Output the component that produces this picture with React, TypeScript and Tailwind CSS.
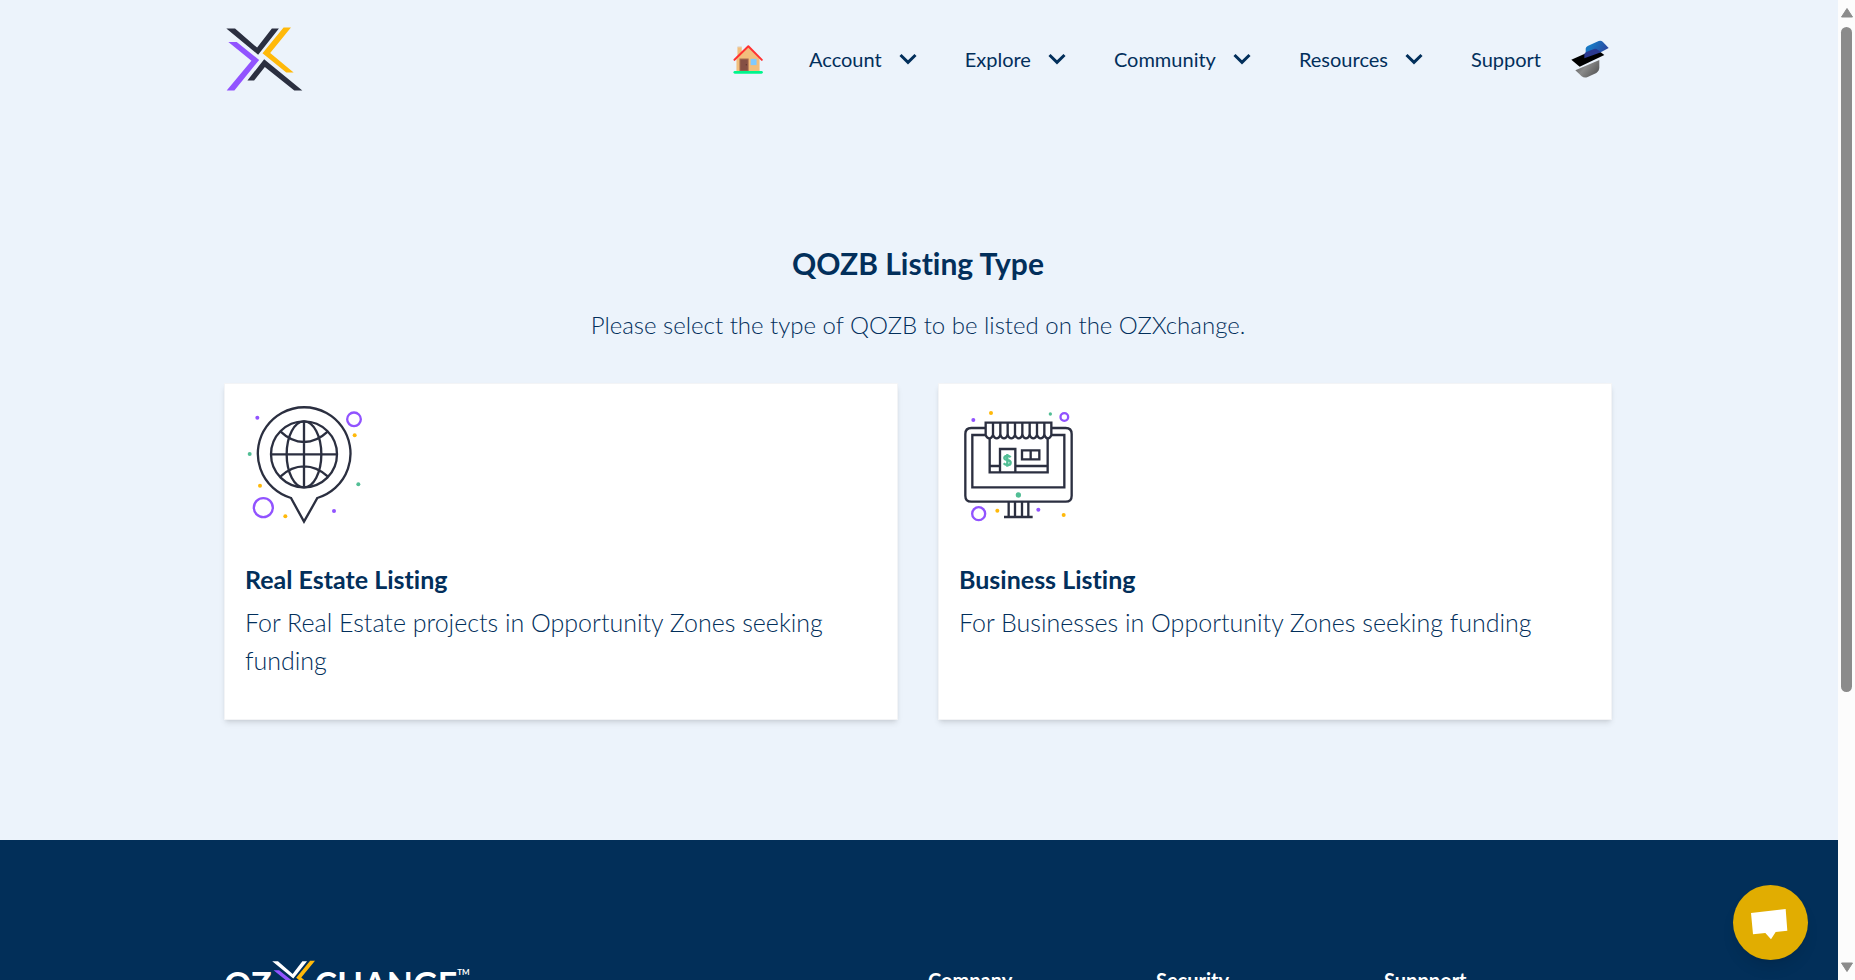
import React, { ReactNode } from "react";

const menus = ["Account", "Explore", "Community", "Resources"];

const footerColumns = ["Company", "Security", "Suppport"];

const LogoMark = ({ className, dark }: { className: string; dark: string }) => (
  <svg viewBox="48 53 230 190" className={className} aria-hidden="true">
    <path fill={dark} d="M49 57H75L141 114L185 57H206L144 135Z" />
    <path fill="#ffb90a" d="M220 54H242L180 130L250 188H228L157 131Z" />
    <path fill="#9153ff" d="M55 97H80L147 151L73 242H50L124 153Z" />
    <path fill={dark} d="M112 212L162 149L276 242H252L164 172L132 212Z" />
  </svg>
);

const HouseIcon = () => (
  <svg viewBox="71 76 90 88" className="h-[29px] w-[30px]" aria-hidden="true">
    <path fill="#f2be7c" d="M84 82H97V100L117 82L151 116V157H81V112L84 109Z" />
    <path fill="#e3e0dc" d="M84 79H97V83H84Z" />
    <path fill="#a56a4e" d="M90 117H118V155H90Z" />
    <path fill="#855044" d="M93 120H115V153H93Z" />
    <circle cx="111" cy="136" r="2" fill="#5d3530" />
    <path fill="#7fcaff" d="M124 118H142V137H124Z" />
    <path fill="none" stroke="#ff3131" strokeWidth="6" strokeLinecap="round" strokeLinejoin="round" d="M75 121L117 80L158 121" />
    <rect x="72" y="155" width="89" height="8" rx="4" fill="#00f58c" />
  </svg>
);

const Chevron = () => (
  <svg viewBox="0 0 18 12" className="h-3 w-[18px]" fill="none" stroke="#022f5b" strokeWidth="3" aria-hidden="true">
    <path d="M1.5 2L9 9.3L16.500 2" />
  </svg>
);

const Avatar = () => (
  <svg viewBox="1172 61 114 114" className="size-[38px]" aria-hidden="true">
    <defs>
      <linearGradient id="blue" x1="0" x2="1" y1="0" y2="0.4">
        <stop offset="0.3" stopColor="#1878c4" />
        <stop offset="1" stopColor="#2a479f" />
      </linearGradient>
      <linearGradient id="gray" x1="0" x2="1" y1="0" y2="0.6">
        <stop offset="0" stopColor="#555" />
        <stop offset="0.5" stopColor="#8a8a8a" />
        <stop offset="1" stopColor="#5c5c5c" />
      </linearGradient>
    </defs>
    <path fill="#000" d="M1173 120L1247 87L1272 106L1198 141Z" />
    <path fill="url(#blue)" d="M1216 104V87Q1216 82 1222 79L1255 64Q1262 61 1267 66L1285 85L1264 96L1216 110Z" />
    <path fill="#2b3990" d="M1212 116V104Q1213 99 1218 97L1241 88Q1247 86 1252 90L1262 98Z" />
    <path fill="url(#gray)" d="M1185 152L1257 121V143Q1257 154 1248 160L1222 172Q1212 176 1204 170Z" />
  </svg>
);

const GlobePin = () => (
  <svg viewBox="90 90 360 360" className="size-[120px]" fill="none" stroke="#2b2f40" strokeWidth="7" aria-hidden="true">
    <path d="M228 366A139 139 0 1 1 307 366L267 437Z" />
    <circle cx="267" cy="235" r="99" />
    <ellipse cx="267" cy="235" rx="52" ry="99" />
    <path d="M267 136V334M168 235H366M197 167Q229 198 267 198T338 167M197 301Q229 271 267 271T338 301" />
    <g stroke="#9153ff">
      <circle cx="417" cy="130" r="20.500" />
      <circle cx="145" cy="395" r="28.500" />
    </g>
    <g stroke="none">
      <circle cx="127" cy="125" r="6" fill="#9153ff" />
      <circle cx="357" cy="405" r="6" fill="#9153ff" />
      <circle cx="419" cy="178" r="6" fill="#ffb90a" />
      <circle cx="135" cy="329" r="6" fill="#ffb90a" />
      <circle cx="211" cy="421" r="6" fill="#ffb90a" />
      <circle cx="104" cy="234" r="6" fill="#52be95" />
      <circle cx="430" cy="325" r="6" fill="#52be95" />
    </g>
  </svg>
);

const StoreMonitor = () => (
  <svg viewBox="87 90 360 360" className="size-[120px]" fill="none" stroke="#2b2f40" strokeWidth="7" aria-hidden="true">
    <path d="M166 156H124Q106 156 106 174V359Q106 377 124 377H407Q425 377 425 359V174Q425 156 407 156H365" />
    <path d="M166 177H127V334H403V177H365" />
    <path d="M179 187V289H353V187M179 270H210M257 270H353M210 289V219H256V289" />
    <path d="M276 223H328V250H276ZM302 223V250" />
    <path d="M167 140H364V178Q360 187 354 187T343 178Q339 187 332 187T321 178Q317 187 310 187T299 178Q295 187 288 187T277 178Q273 187 266 187T255 178Q251 187 244 187T233 178Q229 187 222 187T211 178Q207 187 200 187T189 178Q185 187 178 187T167 178Z" />
    <path d="M189 140V180M211 140V180M233 140V180M255 140V180M277 140V180M299 140V180M321 140V180M343 140V180" />
    <path d="M236 377V423M255 377V423M276 377V423M295 377V423M222 423H308" />
    <path stroke="#52be95" d="M242 244Q238 239 231 240Q222 241 223 247Q224 251 232 252Q242 254 242 260Q242 267 232 267Q225 267 221 262M232 234V272" />
    <g stroke="#9153ff">
      <circle cx="403" cy="123" r="11.500" />
      <circle cx="146" cy="413" r="19.500" />
    </g>
    <g stroke="none">
      <circle cx="130" cy="132" r="6" fill="#9153ff" />
      <circle cx="325" cy="401" r="6" fill="#9153ff" />
      <circle cx="183" cy="111" r="6" fill="#ffb90a" />
      <circle cx="202" cy="404" r="6" fill="#ffb90a" />
      <circle cx="401" cy="417" r="6" fill="#ffb90a" />
      <circle cx="361" cy="114" r="5" fill="#52be95" />
      <circle cx="265" cy="357" r="8" fill="#52be95" />
    </g>
  </svg>
);

const listings = [
  {
    title: "Real Estate Listing",
    text: "For Real Estate projects in Opportunity Zones seeking funding",
    icon: <GlobePin />,
  },
  {
    title: "Business Listing",
    text: "For Businesses in Opportunity Zones seeking funding",
    icon: <StoreMonitor />,
  },
];

const Header = () => (
  <header className="mx-auto flex h-[118px] w-full max-w-[1388px] items-center justify-between">
    <a href="#" aria-label="Home" className="pl-0.5">
      <LogoMark className="h-16 w-[77px]" dark="#2b2f40" />
    </a>
    <nav className="flex items-center text-xl">
      <a href="#" aria-label="Dashboard" className="mr-[46px]">
        <HouseIcon />
      </a>
      {menus.map((menu) => (
        <button key={menu} type="button" className="mr-12 flex items-center gap-[17px]">
          {menu}
          <Chevron />
        </button>
      ))}
      <a href="#">Support</a>
      <button type="button" aria-label="Profile" className="ml-[30px] mr-[3px]">
        <Avatar />
      </button>
    </nav>
  </header>
);

const ListingTypes = () => (
  <main className="mx-auto w-full max-w-[1388px] py-[120px]">
    <h1 className="text-center text-[30px] leading-[50px] font-bold">QOZB Listing Type</h1>
    <p className="mt-[18px] text-center text-2xl leading-[38px] font-light">
      Please select the type of QOZB to be listed on the OZXchange.
    </p>
    <div className="mt-[39px] grid grid-cols-2 gap-10">
      {listings.map((listing) => (
        <a
          key={listing.title}
          href="#"
          className="block border border-gray-100 bg-white px-5 pt-[22px] pb-10 shadow-md"
        >
          {listing.icon}
          <h2 className="mt-[35px] text-[25px] leading-9 font-bold">{listing.title}</h2>
          <p className="mt-1.5 text-[25px] leading-[38px] font-light">{listing.text}</p>
        </a>
      ))}
    </div>
  </main>
);

const Footer = () => (
  <footer className="flex-1 bg-[#022f59] pr-0.5 text-white">
    <div className="mx-auto flex max-w-[1388px] pt-[120px]">
      <div className="flex w-1/2 items-start text-[34px] leading-10 font-bold">
        <span className="pt-1">OZ</span>
        <LogoMark className="h-[43px] w-[51px]" dark="#ffffff" />
        <span className="-ml-2 pt-1">CHANGE</span>
        <span className="pt-1 text-[8px] leading-4">TM</span>
      </div>
      <div className="grid w-1/2 grid-cols-3 pt-1.5 pl-2.5">
        {footerColumns.map((column) => (
          <h3 key={column} className="text-xl font-bold">
            {column}
          </h3>
        ))}
      </div>
    </div>
  </footer>
);

const ScrollBar = () => (
  <div className="flex w-[17px] flex-none flex-col items-center bg-[#fcfcfc] py-2" aria-hidden="true">
    <svg viewBox="0 0 12 10" className="h-2.5 w-3" fill="#8b8b8b">
      <path d="M6 0.500L11.500 9H0.500Z" stroke="#8b8b8b" strokeLinejoin="round" />
    </svg>
    <div className="mt-[9px] h-[69%] w-[11px] rounded-full bg-[#8b8b8b]" />
    <svg viewBox="0 0 12 10" className="mt-auto h-2.5 w-3" fill="#8b8b8b">
      <path d="M6 9.500L11.500 1H0.500Z" stroke="#8b8b8b" strokeLinejoin="round" />
    </svg>
  </div>
);

export default function App(): ReactNode {
  return (
    <div className="flex h-screen overflow-hidden bg-[#ecf3fb] font-['Lato',sans-serif] text-[#022f5b] [font-variant-ligatures:none]">
      <div className="flex min-w-0 flex-1 flex-col overflow-hidden">
        <div className="pr-0.5">
          <Header />
          <ListingTypes />
        </div>
        <Footer />
      </div>
      <ScrollBar />
      <button
        type="button"
        aria-label="Open chat"
        className="fixed right-[47px] bottom-5 size-[75px] rounded-full bg-[#e1ad01] shadow-lg"
      >
        <svg viewBox="69 75 225 225" className="size-full" aria-hidden="true">
          <path fill="#fff" d="M123 159L227 147L232 212L197 216L183 238L166 219L129 223Z" />
        </svg>
      </button>
    </div>
  );
}
